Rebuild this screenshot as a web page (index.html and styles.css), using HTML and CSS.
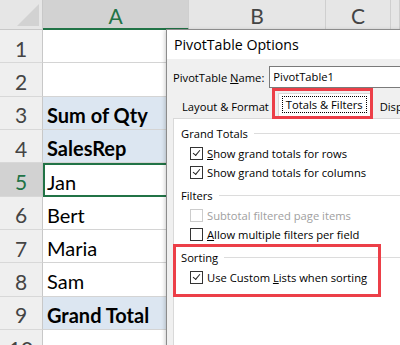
FILE: index.html
```html
<!DOCTYPE html>
<html>
    <head>
        <title>PivotTable Options</title>
        <link rel="stylesheet" href="styles.css">
    </head>
    <body>
        <div class="screen">
            <div class="sheet">
                <div class="corner"><div class="corner-tri"></div></div>
                <div class="colhead selected">A</div>
                <div class="colhead">B</div>
                <div class="colhead">C</div>
                <div class="colhead"></div>

                <div class="rowhead">1</div><div class="cell"></div><div class="cell"></div><div class="cell"></div><div class="cell"></div>
                <div class="rowhead">2</div><div class="cell"></div><div class="cell"></div><div class="cell"></div><div class="cell"></div>
                <div class="rowhead">3</div><div class="cell pivot bold">Sum of Qty</div><div class="cell pivot"></div><div class="cell"></div><div class="cell"></div>
                <div class="rowhead">4</div><div class="cell pivot bold">SalesRep</div><div class="cell pivot"></div><div class="cell"></div><div class="cell"></div>
                <div class="rowhead active">5</div><div class="cell current">Jan</div><div class="cell"></div><div class="cell"></div><div class="cell"></div>
                <div class="rowhead">6</div><div class="cell">Bert</div><div class="cell"></div><div class="cell"></div><div class="cell"></div>
                <div class="rowhead">7</div><div class="cell">Maria</div><div class="cell"></div><div class="cell"></div><div class="cell"></div>
                <div class="rowhead">8</div><div class="cell">Sam</div><div class="cell"></div><div class="cell"></div><div class="cell"></div>
                <div class="rowhead">9</div><div class="cell pivot bold total">Grand Total</div><div class="cell pivot"></div><div class="cell"></div><div class="cell"></div>
                <div class="rowhead">10</div><div class="cell"></div><div class="cell"></div><div class="cell"></div><div class="cell"></div>
            </div>

            <div class="dialog">
                <div class="dlg-title">PivotTable Options</div>
                <div class="dlg-body">
                    <div class="name-row">
                        <span>PivotTable <u>N</u>ame:</span>
                        <div class="name-input">PivotTable1</div>
                    </div>
                    <div class="tabs">
                        <div class="tab">Layout &amp; Format</div>
                        <div class="tab current"><span class="focus">Totals &amp; Filters</span></div>
                        <div class="tab">Display</div>
                    </div>
                    <div class="panel">
                        <div class="group-label"><span>Grand Totals</span></div>
                        <div class="check on"><span class="box"></span><span><u>S</u>how grand totals for rows</span></div>
                        <div class="check on"><span class="box"></span><span>Show <u>g</u>rand totals for columns</span></div>

                        <div class="group-label"><span>Filters</span></div>
                        <div class="check disabled"><span class="box"></span><span>Subtotal filtered page items</span></div>
                        <div class="check"><span class="box"></span><span><u>A</u>llow multiple filters per field</span></div>

                        <div class="group-label"><span>Sorting</span></div>
                        <div class="check on"><span class="box"></span><span>Use Custom <u>L</u>ists when sorting</span></div>
                    </div>
                </div>
                <div class="mark mark-tab"></div>
                <div class="mark mark-sort"></div>
            </div>
        </div>
    </body>
</html>
```

FILE: styles.css
```css
body {
    margin: 0;
    background: #ffffff;
}

.screen {
    position: relative;
    width: 400px;
    height: 345px;
    overflow: hidden;
}

/* ---- worksheet ---- */
.sheet {
    display: grid;
    grid-template-columns: 43px 146px 137px 65px 1fr;
    grid-template-rows: 30px repeat(10, 33.33px);
    font-family: Lato, "Liberation Sans", sans-serif;
    font-size: 20px;
    color: #000;
}

.corner {
    background: #e6e6e6;
    border-right: 1px solid #c8c8c8;
    border-bottom: 1px solid #c8c8c8;
    position: relative;
}
.corner-tri {
    position: absolute;
    right: 3px;
    bottom: 3px;
    width: 0;
    height: 0;
    border-left: 22px solid transparent;
    border-bottom: 22px solid #d2d2d2;
}

.colhead {
    background: #e6e6e6;
    border-right: 1px solid #cfcfcf;
    border-bottom: 1px solid #c8c8c8;
    display: flex;
    align-items: center;
    justify-content: center;
    color: #444;
    font-size: 21px;
    padding-top: 2px;
}
.colhead.selected {
    background: #d2d2d2;
    color: #217346;
    border-bottom: 2px solid #217346;
}

.rowhead {
    background: #efefef;
    border-right: 1px solid #c8c8c8;
    border-bottom: 1px solid #d8d8d8;
    display: flex;
    align-items: center;
    justify-content: center;
    color: #444;
    font-size: 21px;
    padding-top: 4px;
}
.rowhead.active {
    background: #d2d2d2;
    color: #217346;
}

.cell {
    border-right: 1px solid #d4d4d4;
    border-bottom: 1px solid #d4d4d4;
    display: flex;
    align-items: center;
    padding: 4px 0 0 4px;
    white-space: nowrap;
    overflow: hidden;
}
.cell.pivot {
    background: #dce6f1;
}
.cell.bold {
    font-weight: bold;
}
.cell.current {
    border: 2px solid #217346;
    padding-left: 2px;
}

/* ---- dialog ---- */
.dialog {
    position: absolute;
    left: 166px;
    top: 29px;
    width: 260px;
    height: 330px;
    border: 1px solid #8c8c8c;
    background: #f0f0f0;
    box-shadow: -1px 1px 4px rgba(0, 0, 0, 0.2);
    font-family: "Open Sans", "Noto Sans", sans-serif;
    font-size: 11.2px;
    color: #000;
}

.dlg-title {
    background: #ffffff;
    height: 29px;
    padding-left: 7px;
    font-size: 14.2px;
    line-height: 29px;
}

.dlg-body {
    padding: 7px 0 0 6px;
}

.name-row {
    display: flex;
    align-items: center;
    gap: 5px;
    height: 22px;
}
.name-input {
    flex: 1;
    height: 20px;
    line-height: 20px;
    background: #fff;
    border: 1px solid #7a7a7a;
    padding-left: 3px;
}

.tabs {
    display: flex;
    margin-top: 6px;
    height: 24px;
    align-items: flex-end;
}
.tab {
    padding: 0 6px 0 9px;
    height: 22px;
    line-height: 22px;
    white-space: nowrap;
}
.tab.current {
    background: #fff;
    border: 1px solid #d9d9d9;
    border-bottom: none;
    height: 24px;
    line-height: 22px;
    padding: 0 3px 0 3px;
    margin-left: 3px;
}
.tab .focus {
    border: 1px dotted #000;
    padding: 0 3px;
}

.panel {
    background: #fff;
    border: 1px solid #d9d9d9;
    height: 240px;
    padding: 4px 0 0 7px;
}

.group-label {
    display: flex;
    align-items: center;
    height: 21px;
    gap: 6px;
}
.group-label::after {
    content: "";
    flex: 1;
    border-top: 1px solid #dcdcdc;
}

.check {
    display: flex;
    align-items: center;
    gap: 4px;
    height: 19px;
    padding-left: 9px;
}
.check .box {
    width: 11px;
    height: 11px;
    border: 1px solid #333;
    background: #fff;
    position: relative;
}
.check.on .box::after {
    content: "";
    position: absolute;
    left: 2px;
    top: 0px;
    width: 6px;
    height: 3px;
    border-left: 1.3px solid #222;
    border-bottom: 1.3px solid #222;
    transform: translate(0, 2px) rotate(-50deg);
    transform-origin: center;
}
.check.disabled {
    color: #a0a0a0;
}
.check.disabled .box {
    border-color: #cccccc;
}

.check + .group-label {
    margin-top: 3px;
}

/* red annotation boxes */
.mark {
    position: absolute;
    border: 3px solid #ec3f48;
}
.mark-tab {
    left: 105px;
    top: 58px;
    width: 95px;
    height: 25px;
}
.mark-sort {
    left: 6px;
    top: 214px;
    width: 202px;
    height: 47px;
}
```
